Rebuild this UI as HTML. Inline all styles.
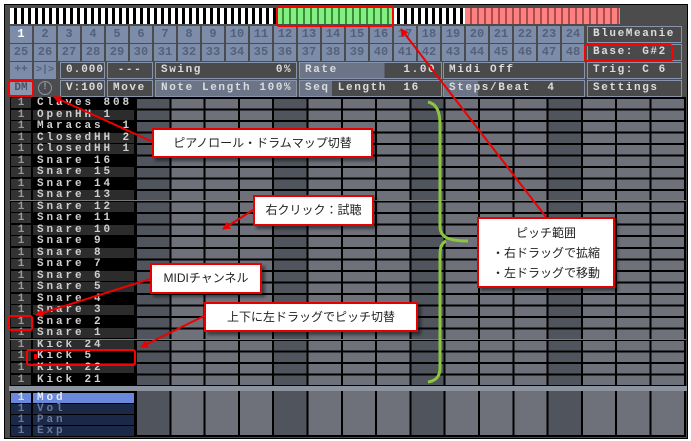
<!DOCTYPE html>
<html><head><meta charset="utf-8"><style>
*{margin:0;padding:0;box-sizing:border-box}
body{width:691px;height:441px;background:#fff;position:relative;overflow:hidden;font-family:"Liberation Mono",monospace;font-weight:bold}
.a{position:absolute}
#frame{left:4px;top:4px;width:684px;height:435px;border:1px solid #000;background:#4c4c4c}
.kb{top:8px;height:16px}
.nb{position:absolute;width:22px;height:17px;background:#7d8ca8;color:#55607a;font-size:12px;text-align:center;line-height:17px;letter-spacing:0}
.f{position:absolute;height:17px;border:1px solid #8794ac;background:#4a4a4a;color:#dcdcdc;font-size:11px;line-height:15px;padding-left:5px;letter-spacing:1.6px;white-space:pre;overflow:hidden}
.row{position:absolute;left:10px;width:125px;height:11.5px;font-size:11px;line-height:11px;letter-spacing:2.9px;color:#cfcfcf;white-space:pre}
.row .c{position:absolute;left:1px;top:1px;width:20px;height:10px;background:#333;color:#9a9a9a;text-align:center;line-height:10px;letter-spacing:0}
.row .n{position:absolute;left:23px;top:1px;width:101px;height:10px;padding-left:4px;line-height:10px;overflow:visible}
.g{background:#2c2c2c}
.box{position:absolute;background:#fff;border:2px solid #e60000;box-shadow:3px 3px 3px rgba(0,0,0,.45);font-family:"Liberation Sans","Noto Sans CJK JP",sans-serif;font-weight:normal;font-size:12px;color:#222;text-align:center}
.hl{position:absolute;border:2px solid #f00;border-radius:3px}
</style></head><body>
<div class="a" id="frame"></div>
<div class="a kb" style="left:10px;width:267px;background:repeating-linear-gradient(to right,#fff 0 4px,#000 4px 7px)"></div>
<div class="a kb" style="left:277px;width:116px;background:repeating-linear-gradient(to right,#80f080 0 5px,#3c8c3c 5px 7px)"></div>
<div class="a kb" style="left:393px;width:72px;background:repeating-linear-gradient(to right,#fff 0 4px,#000 4px 7px)"></div>
<div class="a kb" style="left:465px;width:155px;background:repeating-linear-gradient(to right,#ff8080 0 5px,#a84c4c 5px 7px)"></div>

<div class="nb" style="left:10px;top:26px;color:#fff">1</div><div class="nb" style="left:34px;top:26px">2</div><div class="nb" style="left:58px;top:26px">3</div><div class="nb" style="left:82px;top:26px">4</div><div class="nb" style="left:106px;top:26px">5</div><div class="nb" style="left:130px;top:26px">6</div><div class="nb" style="left:154px;top:26px">7</div><div class="nb" style="left:178px;top:26px">8</div><div class="nb" style="left:202px;top:26px">9</div><div class="nb" style="left:226px;top:26px">10</div><div class="nb" style="left:250px;top:26px">11</div><div class="nb" style="left:274px;top:26px">12</div><div class="nb" style="left:298px;top:26px">13</div><div class="nb" style="left:322px;top:26px">14</div><div class="nb" style="left:346px;top:26px">15</div><div class="nb" style="left:370px;top:26px">16</div><div class="nb" style="left:394px;top:26px">17</div><div class="nb" style="left:418px;top:26px">18</div><div class="nb" style="left:442px;top:26px">19</div><div class="nb" style="left:466px;top:26px">20</div><div class="nb" style="left:490px;top:26px">21</div><div class="nb" style="left:514px;top:26px">22</div><div class="nb" style="left:538px;top:26px">23</div><div class="nb" style="left:562px;top:26px">24</div>
<div class="nb" style="left:10px;top:44px">25</div><div class="nb" style="left:34px;top:44px">26</div><div class="nb" style="left:58px;top:44px">27</div><div class="nb" style="left:82px;top:44px">28</div><div class="nb" style="left:106px;top:44px">29</div><div class="nb" style="left:130px;top:44px">30</div><div class="nb" style="left:154px;top:44px">31</div><div class="nb" style="left:178px;top:44px">32</div><div class="nb" style="left:202px;top:44px">33</div><div class="nb" style="left:226px;top:44px">34</div><div class="nb" style="left:250px;top:44px">35</div><div class="nb" style="left:274px;top:44px">36</div><div class="nb" style="left:298px;top:44px">37</div><div class="nb" style="left:322px;top:44px">38</div><div class="nb" style="left:346px;top:44px">39</div><div class="nb" style="left:370px;top:44px">40</div><div class="nb" style="left:394px;top:44px">41</div><div class="nb" style="left:418px;top:44px">42</div><div class="nb" style="left:442px;top:44px">43</div><div class="nb" style="left:466px;top:44px">44</div><div class="nb" style="left:490px;top:44px">45</div><div class="nb" style="left:514px;top:44px">46</div><div class="nb" style="left:538px;top:44px">47</div><div class="nb" style="left:562px;top:44px">48</div>
<div class="nb" style="left:10px;top:62px;font-size:11px">++</div><div class="nb" style="left:34px;top:62px;font-size:10px">&gt;|&gt;</div>
<div class="nb" style="left:10px;top:80px;background:#8a97ae;color:#4a5266;font-size:11px">DM</div>
<div class="a" style="left:38px;top:81px;width:14px;height:14px;border:1.5px solid #8a97ae;border-radius:50%;color:#8a97ae;font-size:10px;text-align:center;line-height:11px">!</div>

<div class="f" style="left:587px;top:26px;width:95px">BlueMeanie</div>
<div class="f" style="left:587px;top:44px;width:95px">Base: G#2</div>
<div class="f" style="left:60px;top:62px;width:45px;letter-spacing:1px">0.000</div>
<div class="f" style="left:107px;top:62px;width:46px;text-align:center;padding:0">---</div>
<div class="f" style="left:155px;top:62px;width:142px">Swing         0%</div>
<div class="f" style="left:299px;top:62px;width:143px;background:linear-gradient(to right,#6c7488 0 60%,#4a4a4a 60%)">Rate        1.00</div>
<div class="f" style="left:443px;top:62px;width:142px">Midi Off</div>
<div class="f" style="left:587px;top:62px;width:95px">Trig: C 6</div>
<div class="f" style="left:60px;top:80px;width:45px;letter-spacing:1px">V:100</div>
<div class="f" style="left:107px;top:80px;width:46px">Move</div>
<div class="f" style="left:155px;top:80px;width:142px;background:#6c7488">Note Length 100%</div>
<div class="f" style="left:299px;top:80px;width:143px;background:linear-gradient(to right,#6c7488 0 32px,#4a4a4a 32px)">Seq Length  16</div>
<div class="f" style="left:443px;top:80px;width:142px;background:linear-gradient(to right,#6c7488 0 34px,#4a4a4a 34px)">Steps/Beat  4</div>
<div class="f" style="left:587px;top:80px;width:95px">Settings</div>

<div class="a" style="left:10px;top:97px;width:127px;height:289px;background:#000"></div>
<div class="row" style="top:97px"><span class="c">1</span><span class="n">Claves 808</span></div>
<div class="row" style="top:108.5px"><span class="c">1</span><span class="n g">OpenHH 1</span></div>
<div class="row" style="top:120px"><span class="c">1</span><span class="n">Maracas  1</span></div>
<div class="row" style="top:131.5px"><span class="c">1</span><span class="n g">ClosedHH 2</span></div>
<div class="row" style="top:143px"><span class="c">1</span><span class="n g">ClosedHH 1</span></div>
<div class="row" style="top:154.6px"><span class="c">1</span><span class="n">Snare 16</span></div>
<div class="row" style="top:166.1px"><span class="c">1</span><span class="n g">Snare 15</span></div>
<div class="row" style="top:177.6px"><span class="c">1</span><span class="n">Snare 14</span></div>
<div class="row" style="top:189.2px"><span class="c">1</span><span class="n g">Snare 13</span></div>
<div class="row" style="top:200.7px"><span class="c">1</span><span class="n g">Snare 12</span></div>
<div class="row" style="top:212.2px"><span class="c">1</span><span class="n">Snare 11</span></div>
<div class="row" style="top:223.7px"><span class="c">1</span><span class="n g">Snare 10</span></div>
<div class="row" style="top:235.2px"><span class="c">1</span><span class="n">Snare 9</span></div>
<div class="row" style="top:246.8px"><span class="c">1</span><span class="n g">Snare 8</span></div>
<div class="row" style="top:258.3px"><span class="c">1</span><span class="n">Snare 7</span></div>
<div class="row" style="top:269.8px"><span class="c">1</span><span class="n g">Snare 6</span></div>
<div class="row" style="top:281.3px"><span class="c">1</span><span class="n g">Snare 5</span></div>
<div class="row" style="top:292.8px"><span class="c">1</span><span class="n">Snare 4</span></div>
<div class="row" style="top:304.4px"><span class="c">1</span><span class="n g">Snare 3</span></div>
<div class="row" style="top:315.9px"><span class="c">1</span><span class="n">Snare 2</span></div>
<div class="row" style="top:327.4px"><span class="c">1</span><span class="n g">Snare 1</span></div>
<div class="row" style="top:338.9px"><span class="c">1</span><span class="n g">Kick 24</span></div>
<div class="row" style="top:350.4px"><span class="c">1</span><span class="n"><span style="position:absolute;left:1px;top:3px;width:3px;height:5px;background:#e00"></span>Kick 5</span></div>
<div class="row" style="top:362px"><span class="c">1</span><span class="n g">Kick 22</span></div>
<div class="row" style="top:373.5px"><span class="c">1</span><span class="n">Kick 21</span></div>

<div class="a" style="left:137px;top:97px;width:549px;height:289px;background:
repeating-linear-gradient(to bottom,#000 0 2px,transparent 2px 11.52px),
repeating-linear-gradient(to right,transparent 0 32.3px,#000 32.3px 34.3px),
repeating-linear-gradient(to right,#50545c 0 34.3px,#6e717a 34.3px 137.2px)"></div>
<div class="a" style="left:10px;top:200px;width:676px;height:1px;background:#777"></div>
<div class="a" style="left:10px;top:339px;width:676px;height:1px;background:#777"></div>

<div class="a" style="left:9px;top:386px;width:678px;height:5px;background:#8a939e"></div>
<div class="a" style="left:10px;top:391px;width:127px;height:46px;background:#000"></div>
<div class="a" style="left:137px;top:391px;width:549px;height:46px;border-bottom:2px solid #000;background:
repeating-linear-gradient(to right,transparent 0 32.3px,#000 32.3px 34.3px),
repeating-linear-gradient(to right,#50545c 0 34.3px,#6e717a 34.3px 137.2px)"></div>
<div class="row" style="top:392px;color:#e8ecff"><span class="c" style="background:#6a88dc;color:#dde">1</span><span class="n" style="background:#6a88dc">Mod</span></div>
<div class="row" style="top:403px;color:#6c7898"><span class="c" style="background:#1c2848;color:#6c7898">1</span><span class="n" style="background:#1c2848">Vol</span></div>
<div class="row" style="top:414px;color:#6c7898"><span class="c" style="background:#1c2848;color:#6c7898">1</span><span class="n" style="background:#1c2848">Pan</span></div>
<div class="row" style="top:425px;color:#6c7898"><span class="c" style="background:#1c2848;color:#6c7898">1</span><span class="n" style="background:#1c2848">Exp</span></div>

<div class="hl" style="left:276px;top:6px;width:118px;height:21px"></div>
<div class="hl" style="left:8px;top:80px;width:26px;height:17px"></div>
<div class="hl" style="left:584px;top:44px;width:89px;height:18px"></div>
<div class="hl" style="left:8px;top:315px;width:25px;height:16px"></div>
<div class="hl" style="left:26px;top:349px;width:110px;height:17px"></div>

<svg class="a" style="left:0;top:0" width="691" height="441">
<defs><marker id="ah" markerWidth="8" markerHeight="8" refX="7" refY="4" orient="auto" markerUnits="userSpaceOnUse"><path d="M0,0 L8,4 L0,8 z" fill="#e00"/></marker></defs>
<g stroke="#e00" stroke-width="2" fill="none" marker-end="url(#ah)">
<line x1="153" y1="142" x2="54" y2="97"/>
<line x1="253" y1="210" x2="223" y2="229"/>
<line x1="150" y1="279" x2="36" y2="315"/>
<line x1="204" y1="316" x2="141" y2="347"/>
<line x1="546" y1="217" x2="401" y2="29"/>
</g>
<path d="M428,102 C437,104 440,112 440,125 L440,226 C440,236 446,241 468,241 M446,241 C440,244 440,250 440,258 L440,368 C440,376 436,381 428,382" stroke="#8cc63f" stroke-width="3" fill="none"/>
</svg>

<div class="box" style="left:152px;top:128px;width:221px;height:30px;line-height:26px">ピアノロール・ドラムマップ切替</div>
<div class="box" style="left:253px;top:195px;width:121px;height:31px;line-height:27px">右クリック：試聴</div>
<div class="box" style="left:150px;top:263px;width:112px;height:31px;line-height:27px">MIDIチャンネル</div>
<div class="box" style="left:204px;top:302px;width:214px;height:30px;line-height:26px">上下に左ドラッグでピッチ切替</div>
<div class="box" style="left:477px;top:217px;width:138px;height:71px;line-height:20px;padding-top:4px">ピッチ範囲<br>・右ドラッグで拡縮<br>・左ドラッグで移動</div>
</body></html>
